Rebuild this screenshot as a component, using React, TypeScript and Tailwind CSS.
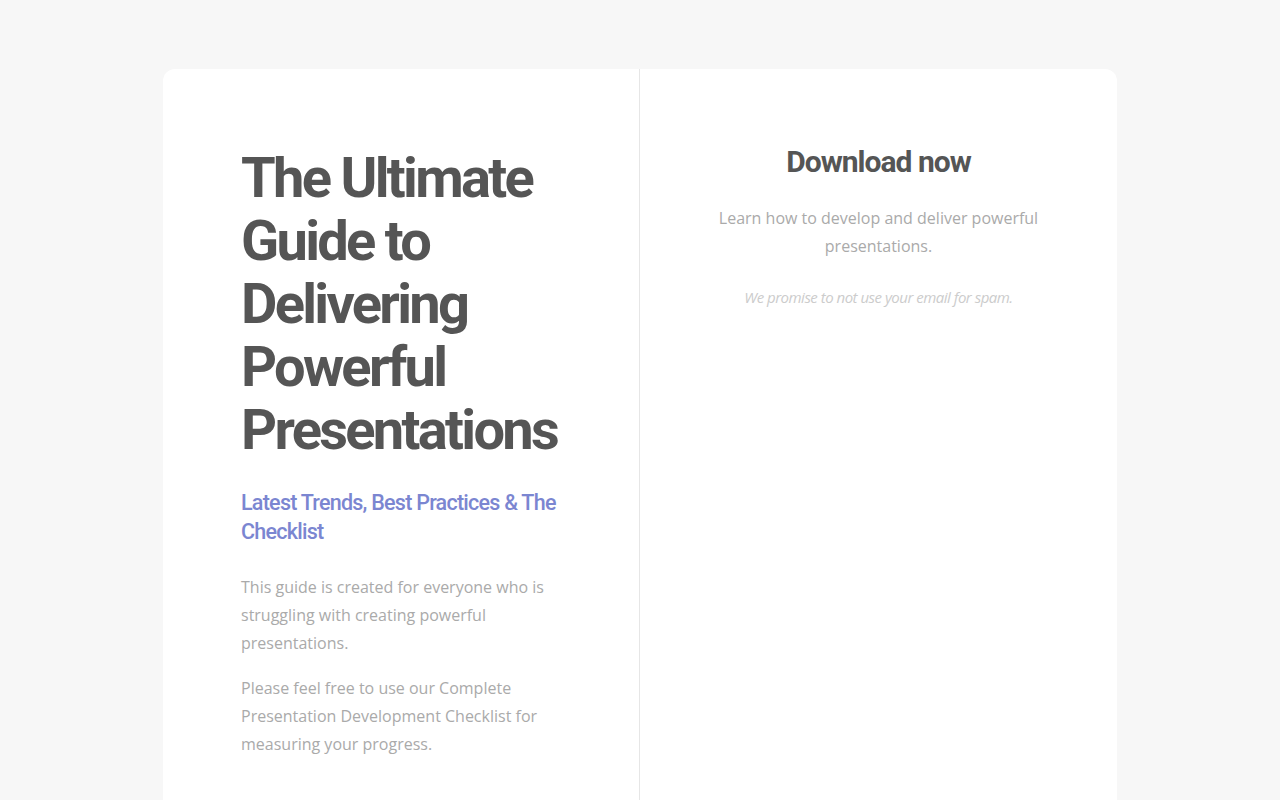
import React from 'react';

const App: React.FC = () => {
  return (
    <div className="min-h-screen bg-[#f7f7f7] pt-[69px] overflow-hidden h-[800px]">
      <div className="mx-auto w-[954px] bg-white rounded-t-[12px] grid grid-cols-2 min-h-[800px]">
        <div className="border-r border-[#e6e6e6] px-[78px] pt-[78px] pb-20">
          <h1 className="font-['Roboto',sans-serif] font-bold text-[56px] leading-[63px] tracking-[-2.7px] text-[#555555]">
            The Ultimate Guide to Delivering Powerful Presentations
          </h1>
          <h2 className="mt-[26px] font-['Roboto',sans-serif] font-medium text-[21.5px] leading-[29px] tracking-[-0.75px] text-[#7b86d1]">
            Latest Trends, Best Practices &amp; The Checklist
          </h2>
          <div className="mt-[27px] font-['Open_Sans',sans-serif] text-[16px] leading-[28px] text-[#aaaaaa] flex flex-col gap-[17px]">
            <p>This guide is created for everyone who is struggling with creating powerful presentations.</p>
            <p>Please feel free to use our Complete Presentation Development Checklist for measuring your progress.</p>
          </div>
        </div>
        <div className="px-[78px] pt-[74px] text-center">
          <h2 className="font-['Roboto',sans-serif] font-bold text-[30px] leading-[38px] tracking-[-1px] text-[#555555]">
            Download now
          </h2>
          <p className="mt-[23px] font-['Open_Sans',sans-serif] text-[16px] leading-[28px] text-[#aaaaaa]">
            Learn how to develop and deliver powerful presentations.
          </p>
          <p className="mt-[25px] font-['Open_Sans',sans-serif] italic text-[15px] leading-[24px] tracking-[-0.5px] text-[#cccccc]">
            We promise to not use your email for spam.
          </p>
        </div>
      </div>
    </div>
  );
};

export default App;
